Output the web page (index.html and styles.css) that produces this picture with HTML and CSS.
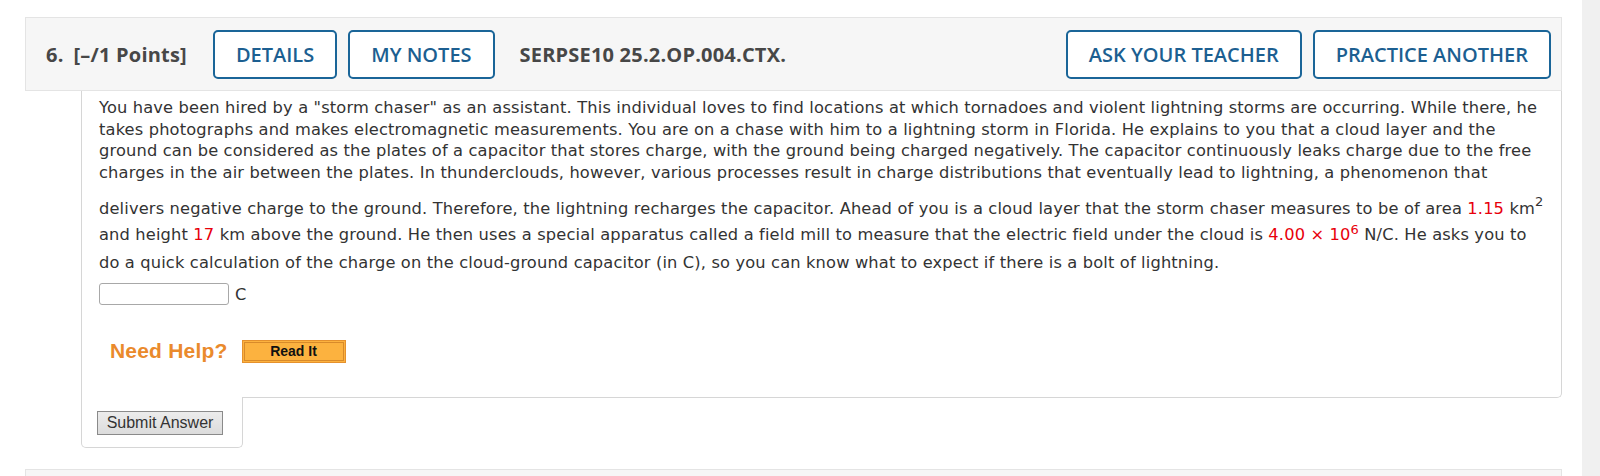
FILE: index.html
```html
<!DOCTYPE html>
<html>
<head>
<meta charset="utf-8">
<link rel="stylesheet" href="styles.css">
</head>
<body>
<div class="main">
  <div class="qhead">
    <span class="qnum">6.</span>
    <span class="qpts">[–/1 Points]</span>
    <button class="hbtn">DETAILS</button>
    <button class="hbtn">MY NOTES</button>
    <span class="qcode">SERPSE10 25.2.OP.004.CTX.</span>
    <span class="spacer"></span>
    <button class="hbtn">ASK YOUR TEACHER</button>
    <button class="hbtn">PRACTICE ANOTHER</button>
  </div>
  <div class="qbody">
    <p class="qtext">You have been hired by a "storm chaser" as an assistant. This individual loves to find locations at which tornadoes and violent lightning storms are occurring. While there, he takes photographs and makes electromagnetic measurements. You are on a chase with him to a lightning storm in Florida. He explains to you that a cloud layer and the ground can be considered as the plates of a capacitor that stores charge, with the ground being charged negatively. The capacitor continuously leaks charge due to the free charges in the air between the plates. In thunderclouds, however, various processes result in charge distributions that eventually lead to lightning, a phenomenon that delivers negative charge to the ground. Therefore, the lightning recharges the capacitor. Ahead of you is a cloud layer that the storm chaser measures to be of area <span class="red">1.15</span> km<sup class="sup-tall">2</sup> and height <span class="red">17</span> km above the ground. He then uses a special apparatus called a field mill to measure that the electric field under the cloud is <span class="red sci">4.00 × 10<sup class="sup">6</sup></span> N/C. He asks you to do a quick calculation of the charge on the cloud-ground capacitor (in C), so you can know what to expect if there is a bolt of lightning.</p>
    <div class="answer"><input class="ans" type="text"><span class="unit">C</span></div>
    <div class="help"><span class="need">Need Help?</span><button class="readit">Read It</button></div>
  </div>
  <div class="subtab"><button class="submit">Submit Answer</button></div>
  <div class="qhead nexthead"></div>
</div>
<div class="strip"></div>
</body>
</html>
```
FILE: styles.css
```css
html, body {
  margin: 0;
  padding: 0;
}
body {
  height: 476px;
  overflow: hidden;
  display: flex;
  background: #fff;
}
.main {
  margin-left: 25px;
  width: 1537px;
  padding-top: 17px;
}
.strip {
  margin-left: auto;
  width: 18px;
  background: #f0f0f0;
}
.qhead {
  display: flex;
  align-items: center;
  height: 72px;
  background: #f6f6f6;
  border: 1px solid #e4e4e4;
  padding: 0 10px 0 20px;
  font-family: "Open Sans", sans-serif;
}
.qnum, .qpts, .qcode {
  font-weight: 700;
  font-size: 20px;
  letter-spacing: 0.2px;
  color: #474747;
}
.qnum {
  margin-right: 10px;
}
.qpts {
  margin-right: 26px;
}
.hbtn {
  box-sizing: border-box;
  height: 49px;
  padding: 0 21px;
  margin-right: 11px;
  background: #fff;
  border: 2px solid #1a6598;
  border-radius: 5px;
  color: #1c5f91;
  font-family: "Open Sans", sans-serif;
  font-size: 20px;
  font-weight: 600;
}
.qcode {
  margin-left: 14px;
}
.spacer {
  flex: 1;
}
.hbtn:last-child {
  margin-right: 0;
}
.qbody {
  margin-left: 56px;
  border: 1px solid #d6d6d6;
  border-top: none;
  border-bottom-right-radius: 5px;
  padding: 6px 10px 34px 17px;
  font-family: "DejaVu Sans", Verdana, sans-serif;
  font-size: 16.25px;
  letter-spacing: 0.15px;
  color: #333;
}
.qtext {
  margin: 0;
  line-height: 21.7px;
}
.red {
  color: #e8000b;
}
.sci {
  line-height: 32.5px;
}
.sup {
  font-size: 0.8em;
  line-height: 1;
}
.sup-tall {
  display: inline-block;
  font-size: 13px;
  line-height: 13px;
  vertical-align: 7px;
  padding-top: 11.5px;
}
.answer {
  display: flex;
  align-items: center;
  margin-top: 10px;
}
.ans {
  box-sizing: border-box;
  width: 130px;
  height: 22px;
  border: 1px solid #a8a8a8;
  border-radius: 3px;
  margin: 0;
}
.unit {
  margin-left: 6px;
}
.help {
  display: flex;
  align-items: center;
  margin-top: 34px;
  padding-left: 11px;
}
.need {
  font-family: "Liberation Sans", Arial, sans-serif;
  font-weight: 700;
  font-size: 21px;
  letter-spacing: 0.2px;
  color: #ea8a2c;
  margin-right: 14px;
}
.readit {
  box-sizing: border-box;
  width: 104px;
  height: 23px;
  padding: 0;
  background: #fcb23f;
  border: 1px solid #e5912d;
  box-shadow: inset 0 0 0 1px #fcb23f, inset 0 0 0 2px #d88a2a;
  border-radius: 0;
  font-family: "Liberation Sans", Arial, sans-serif;
  font-weight: 700;
  font-size: 14px;
  color: #111;
}
.subtab {
  position: relative;
  width: 145px;
  margin-left: 56px;
  margin-top: -1px;
  background: #fff;
  border: 1px solid #d6d6d6;
  border-top: none;
  border-radius: 0 0 5px 5px;
  padding: 14px 0 12px 15px;
}
.submit {
  box-sizing: border-box;
  width: 126px;
  height: 24px;
  padding: 0;
  background: linear-gradient(#ececec, #dcdcdc);
  border: 1px solid #8a8a8a;
  border-radius: 0;
  font-family: "Liberation Sans", Arial, sans-serif;
  font-size: 16px;
  color: #333;
}
.nexthead {
  margin-top: 21px;
  height: 7px;
  border-bottom: none;
}
```
